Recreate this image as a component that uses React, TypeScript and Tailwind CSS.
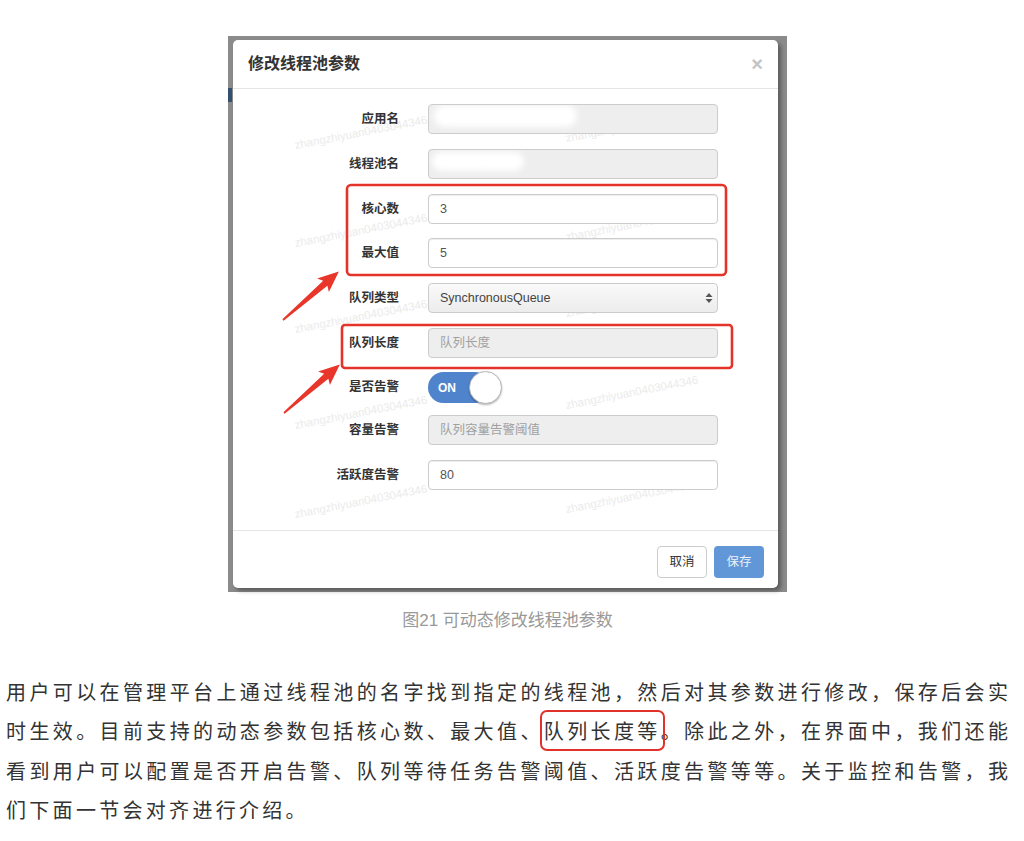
import React from "react";

const WM = "zhangzhiyuan0403044346";

function Label({ children }: { children: React.ReactNode }) {
  return (
    <div className="w-[166px] shrink-0 text-right text-[12.5px] font-bold text-[#333] leading-none">
      {children}
    </div>
  );
}

const boxBase =
  "ml-[29px] h-[30px] w-[290px] rounded-[4px] border border-[#ccc] px-[11px] flex items-center text-[12.5px] relative overflow-hidden";

function Arrow({ x, y, angle }: { x: number; y: number; angle: number }) {
  return (
    <polygon
      points="0,-0.9 56,-3.2 53,-9 74,0 53,9 56,3.2 0,0.9"
      fill="#e8362b"
      transform={`translate(${x} ${y}) rotate(${angle})`}
    />
  );
}

export default function App() {
  const wmLeft = [152, 250, 336, 432, 521];
  const wmRight = [145, 244, 320, 412, 516];
  return (
    <div
      className="w-[1024px] h-[841px] bg-white overflow-hidden pt-[36px]"
      style={{ fontFamily: '"Liberation Sans", "Noto Sans CJK SC", sans-serif' }}
    >
      {/* Figure */}
      <div className="relative ml-[228px] w-[559px] h-[556px] bg-[#8b8b8b] pl-[5px] pt-[4px]">
        <div className="absolute left-0 top-[52px] w-[4px] h-[14px] bg-[#34506f]" />
        <div className="relative w-[545px] h-[548px] bg-white rounded-[5px] flex flex-col shadow-[3px_3px_4px_rgba(0,0,0,0.35)]">
          {/* watermarks */}
          {wmLeft.map((y, i) => (
            <div
              key={"l" + i}
              className="absolute left-[63px] origin-bottom-left -rotate-[11deg] text-[11.5px] leading-[13px] text-[#ebebeb] whitespace-nowrap"
              style={{ top: y - 40 - 13 }}
            >
              {WM}
            </div>
          ))}
          {wmRight.map((y, i) => (
            <div
              key={"r" + i}
              className="absolute left-[334px] origin-bottom-left -rotate-[11deg] text-[11.5px] leading-[13px] text-[#ebebeb] whitespace-nowrap"
              style={{ top: y - 40 - 13 }}
            >
              {WM}
            </div>
          ))}

          {/* header */}
          <div className="relative z-10 h-[49px] shrink-0 border-b border-[#e5e5e5] flex items-center justify-between pl-[15px] pr-[15px]">
            <div className="text-[16px] font-bold text-[#333]">修改线程池参数</div>
            <div className="text-[20px] leading-none text-[#c4c4c4] font-bold">×</div>
          </div>

          {/* body */}
          <div className="relative z-10 flex-1 flex flex-col pt-[15px]">
            <div className="flex items-center">
              <Label>应用名</Label>
              <div className={boxBase + " bg-[#eeeeee] text-[#999]"}>
                <span className="tracking-[3px]">· · · ·</span>
                <div className="absolute left-[5px] top-[0px] w-[143px] h-[22px] rounded-full bg-white blur-[3px]" />
              </div>
            </div>
            <div className="flex items-center mt-[15px]">
              <Label>线程池名</Label>
              <div className={boxBase + " bg-[#eeeeee] text-[#999]"}>
                <span className="tracking-[3px]">· · · ·</span>
                <div className="absolute left-[3px] top-[2px] w-[92px] h-[19px] rounded-full bg-white blur-[3px]" />
              </div>
            </div>
            <div className="flex items-center mt-[15px]">
              <Label>核心数</Label>
              <div className={boxBase + " bg-white text-[#555] shadow-[inset_0_1px_1px_rgba(0,0,0,0.075)]"}>3</div>
            </div>
            <div className="flex items-center mt-[14px]">
              <Label>最大值</Label>
              <div className={boxBase + " bg-white text-[#555] shadow-[inset_0_1px_1px_rgba(0,0,0,0.075)]"}>5</div>
            </div>
            <div className="flex items-center mt-[15px]">
              <Label>队列类型</Label>
              <div className={boxBase + " bg-gradient-to-b from-[#fafafa] to-[#ececec] text-[#444] justify-between pr-[4px]"}>
                <span>SynchronousQueue</span>
                <svg width="8" height="12" viewBox="0 0 8 12">
                  <polygon points="4,1 7.5,5 0.5,5" fill="#555" />
                  <polygon points="4,11 7.5,7 0.5,7" fill="#555" />
                </svg>
              </div>
            </div>
            <div className="flex items-center mt-[15px]">
              <Label>队列长度</Label>
              <div className={boxBase + " bg-[#eeeeee] text-[#a0a0a0]"}>队列长度</div>
            </div>
            <div className="flex items-center mt-[14px] h-[31px]">
              <Label>是否告警</Label>
              <div className="ml-[29px] relative w-[75px] h-[31px]">
                <div className="w-[62px] h-[31px] rounded-full bg-[#4f84cc] flex items-center pl-[10px] text-[12px] font-bold text-white">
                  ON
                </div>
                <div className="absolute left-[41px] top-[-1px] w-[33px] h-[33px] rounded-full bg-white border border-[#b5b5b5] shadow-[0_1px_2px_rgba(0,0,0,0.3)]" />
              </div>
            </div>
            <div className="flex items-center mt-[12px]">
              <Label>容量告警</Label>
              <div className={boxBase + " bg-[#eeeeee] text-[#a0a0a0]"}>队列容量告警阈值</div>
            </div>
            <div className="flex items-center mt-[15px]">
              <Label>活跃度告警</Label>
              <div className={boxBase + " bg-white text-[#555] shadow-[inset_0_1px_1px_rgba(0,0,0,0.075)]"}>80</div>
            </div>
          </div>

          {/* footer */}
          <div className="relative z-10 h-[58px] shrink-0 border-t border-[#e5e5e5] flex justify-end items-start pt-[15px] pr-[14px] gap-[7px]">
            <div className="w-[50px] h-[32px] rounded-[4px] border border-[#ccc] bg-white flex items-center justify-center text-[12.5px] text-[#333]">
              取消
            </div>
            <div className="w-[50px] h-[32px] rounded-[4px] bg-[#6197d6] flex items-center justify-center text-[12.5px] text-[#eaf1fa]">
              保存
            </div>
          </div>
        </div>

        {/* annotations */}
        <svg className="absolute left-0 top-0 z-20 pointer-events-none" width="559" height="556" viewBox="0 0 559 556">
          <rect x="119" y="149" width="379" height="90" rx="4" fill="none" stroke="#e5332a" strokeWidth="2.6" />
          <rect x="114" y="289" width="390" height="43" rx="3" fill="none" stroke="#e5332a" strokeWidth="2.6" />
          <Arrow x={55} y={284} angle={-41} />
          <Arrow x={56} y={377} angle={-41} />
        </svg>
      </div>

      {/* caption */}
      <div className="ml-[228px] w-[559px] mt-[17px] h-[24px] leading-[24px] text-center text-[17px] text-[#999]">
        图21 可动态修改线程池参数
      </div>

      {/* paragraph */}
      <div
        className="ml-[6px] w-[1002px] mt-[39px] text-[20px] leading-[39.4px] text-[#333]"
        style={{ fontFamily: '"Noto Sans CJK SC", sans-serif' }}
      >
        <div className="text-justify [text-align-last:justify] whitespace-nowrap">
          用户可以在管理平台上通过线程池的名字找到指定的线程池，然后对其参数进行修改，保存后会实
        </div>
        <div className="text-justify [text-align-last:justify] whitespace-nowrap">
          时生效。目前支持的动态参数包括核心数、最大值、
          <span className="outline-solid outline-[2.5px] outline-[#e0322b] outline-offset-[2px] rounded-[3px] py-[2px]">
            队列长度等
          </span>
          。除此之外，在界面中，我们还能
        </div>
        <div className="text-justify [text-align-last:justify] whitespace-nowrap">
          看到用户可以配置是否开启告警、队列等待任务告警阈值、活跃度告警等等。关于监控和告警，我
        </div>
        <div className="tracking-[3.3px]">们下面一节会对齐进行介绍。</div>
      </div>
    </div>
  );
}
